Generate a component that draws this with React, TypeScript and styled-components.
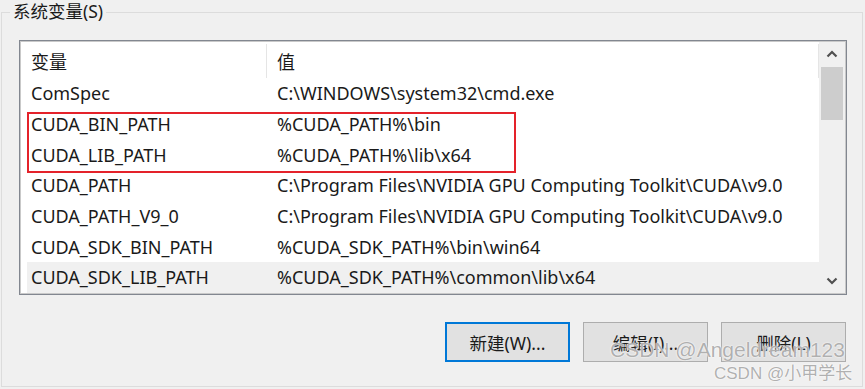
import React from "react";
import styled, { createGlobalStyle } from "styled-components";

const Global = createGlobalStyle`
  html, body { margin: 0; padding: 0; background: #f0f0f0; }
  body { font-family: "Noto Sans", "Noto Sans CJK SC", sans-serif; }
`;

const Page = styled.div`
  position: relative;
  width: 865px;
  height: 389px;
  background: #f0f0f0;
  overflow: hidden;
  box-sizing: border-box;
  padding: 0 2px 0 1px;
  color: #1a1a1a;
  font-size: 18px;
`;

const Group = styled.fieldset`
  margin: 0;
  height: 387px;
  box-sizing: border-box;
  border: 1px solid #dcdcdc;
  padding: 0 15px 0 17px;
  min-width: 0;
`;

const Legend = styled.legend`
  margin-left: -9px;
  padding: 0 3px;
  height: 24px;
  line-height: 22px;
  font-size: 17.5px;
  color: #1a1a1a;
`;

const ListBox = styled.div`
  margin-top: 16px;
  width: 828px;
  height: 255px;
  box-sizing: border-box;
  border: 1px solid #828790;
  box-shadow: inset 0 0 0 1px #c9c9c9;
  background: #ffffff;
  display: flex;
  padding: 1px;
  position: relative;
`;

const Table = styled.div`
  flex: 1;
  padding-left: 6px;
  display: flex;
  flex-direction: column;
  overflow: hidden;
`;

const HeaderRow = styled.div`
  height: 36px;
  display: flex;
  align-items: stretch;
  flex-shrink: 0;
`;

const HeaderCell = styled.div<{ $w?: number; $pad: number }>`
  ${(p) => (p.$w ? `width: ${p.$w}px;` : "flex: 1;")}
  display: flex;
  align-items: center;
  padding-left: ${(p) => p.$pad}px;
  box-sizing: border-box;
  border-right: 1px solid #e5e5e5;
  margin: 2px 0 0 0;
`;

const Row = styled.div<{ $hl?: boolean }>`
  height: 30.67px;
  display: flex;
  align-items: center;
  flex-shrink: 0;
  background: ${(p) => (p.$hl ? "#f0f0f0" : "transparent")};
  white-space: nowrap;
`;

const Cell = styled.div<{ $w?: number }>`
  ${(p) => (p.$w ? `width: ${p.$w}px;` : "flex: 1;")}
  padding-left: 4px;
  box-sizing: border-box;
  overflow: hidden;
`;

const ScrollBar = styled.div`
  width: 26px;
  background: #f0f0f0;
  display: flex;
  flex-direction: column;
  align-items: center;
`;

const Arrow = styled.div`
  height: 24px;
  width: 26px;
  display: flex;
  align-items: center;
  justify-content: center;
`;

const Track = styled.div`
  flex: 1;
  width: 22px;
  display: flex;
  flex-direction: column;
`;

const Thumb = styled.div`
  margin-top: 1px;
  height: 53px;
  background: #cdcdcd;
`;

const Highlight = styled.div`
  position: absolute;
  left: 7px;
  top: 71px;
  width: 489px;
  height: 61px;
  border: 2px solid #e4222a;
  box-sizing: border-box;
  pointer-events: none;
`;

const Buttons = styled.div`
  margin-top: 27px;
  display: flex;
  justify-content: flex-end;
  gap: 13px;
  padding-right: 1px;
`;

const Button = styled.button<{ $default?: boolean }>`
  width: 125px;
  height: 40px;
  box-sizing: border-box;
  background: #e1e1e1;
  border: ${(p) => (p.$default ? "2px solid #0078d7" : "1px solid #adadad")};
  font-family: "Noto Sans", "Noto Sans CJK SC", sans-serif;
  font-size: 17.5px;
  color: #1a1a1a;
  padding: 0;
`;

const Watermark = styled.div<{ $x: number; $y: number; $size: number }>`
  position: absolute;
  left: ${(p) => p.$x}px;
  top: ${(p) => p.$y}px;
  font-size: ${(p) => p.$size}px;
  font-family: "Liberation Sans", "Noto Sans CJK SC", sans-serif;
  color: rgba(150, 150, 150, 0.75);
  text-shadow: 0 0 1px #ffffff, 0 0 2px #ffffff;
  white-space: nowrap;
  pointer-events: none;
`;

const rows: [string, string][] = [
  ["ComSpec", "C:\\WINDOWS\\system32\\cmd.exe"],
  ["CUDA_BIN_PATH", "%CUDA_PATH%\\bin"],
  ["CUDA_LIB_PATH", "%CUDA_PATH%\\lib\\x64"],
  ["CUDA_PATH", "C:\\Program Files\\NVIDIA GPU Computing Toolkit\\CUDA\\v9.0"],
  ["CUDA_PATH_V9_0", "C:\\Program Files\\NVIDIA GPU Computing Toolkit\\CUDA\\v9.0"],
  ["CUDA_SDK_BIN_PATH", "%CUDA_SDK_PATH%\\bin\\win64"],
  ["CUDA_SDK_LIB_PATH", "%CUDA_SDK_PATH%\\common\\lib\\x64"],
];

const Chevron = ({ up }: { up?: boolean }) => (
  <svg width="12" height="8" viewBox="0 0 12 8">
    <path
      d={up ? "M1.5 6.5 L6 2 L10.5 6.5" : "M1.5 1.5 L6 6 L10.5 1.5"}
      fill="none"
      stroke="#505050"
      strokeWidth="2.2"
    />
  </svg>
);

export default function App() {
  return (
    <>
      <Global />
      <Page>
        <Group>
          <Legend>系统变量(S)</Legend>
          <ListBox>
            <Table>
              <HeaderRow>
                <HeaderCell $w={240} $pad={4}>变量</HeaderCell>
                <HeaderCell $pad={10}>值</HeaderCell>
              </HeaderRow>
              {rows.map(([k, v], i) => (
                <Row key={k} $hl={i === rows.length - 1}>
                  <Cell $w={246}>{k}</Cell>
                  <Cell>{v}</Cell>
                </Row>
              ))}
            </Table>
            <ScrollBar>
              <Arrow>
                <Chevron up />
              </Arrow>
              <Track>
                <Thumb />
              </Track>
              <Arrow>
                <Chevron />
              </Arrow>
            </ScrollBar>
            <Highlight />
          </ListBox>
          <Buttons>
            <Button $default>新建(W)...</Button>
            <Button>编辑(I)...</Button>
            <Button>删除(L)</Button>
          </Buttons>
        </Group>
        <Watermark $x={610} $y={338} $size={21}>CSDN @Angeldream123</Watermark>
        <Watermark $x={714} $y={359} $size={17}>CSDN @小甲学长</Watermark>
      </Page>
    </>
  );
}
